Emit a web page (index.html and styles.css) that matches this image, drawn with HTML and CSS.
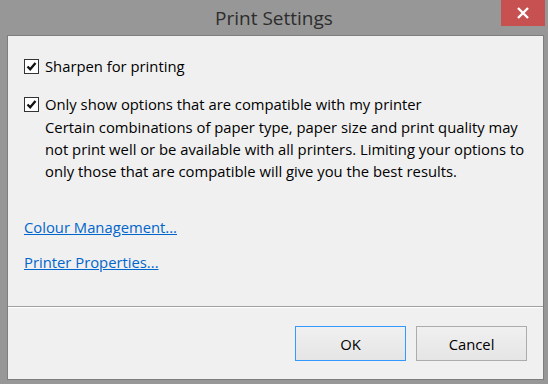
FILE: index.html
```html
<!DOCTYPE html>
<html lang="en">
<head>
  <meta charset="UTF-8">
  <title>Print Settings</title>
  <link rel="stylesheet" href="styles.css">
</head>
<body>

  <div class="window">
    <div class="titlebar">
      <span></span>
      <h1 class="title">Print Settings</h1>
      <button class="close" aria-label="Close">
        <svg width="14" height="12" viewBox="0 0 14 12">
          <path d="M2 1 L12 11 M12 1 L2 11" stroke="#fff" stroke-width="2.4" fill="none"/>
        </svg>
      </button>
    </div>

    <div class="client">
      <div class="options">
        <label class="check">
          <span class="box"><svg width="13" height="13" viewBox="0 0 13 13"><path d="M2.5 6.5 L5.2 9.3 L10.5 3" stroke="#111" stroke-width="2.3" fill="none"/></svg></span>
          Sharpen for printing
        </label>

        <div class="group">
          <label class="check">
            <span class="box"><svg width="13" height="13" viewBox="0 0 13 13"><path d="M2.5 6.5 L5.2 9.3 L10.5 3" stroke="#111" stroke-width="2.3" fill="none"/></svg></span>
            Only show options that are compatible with my printer
          </label>
          <p class="hint">Certain combinations of paper type, paper size and print quality may<br>not print well or be available with all printers. Limiting your options to<br>only those that are compatible will give you the best results.</p>
        </div>

        <div class="links">
          <a href="#">Colour Management...</a>
          <a href="#">Printer Properties...</a>
        </div>
      </div>

      <div class="footer">
        <button class="btn default">OK</button>
        <button class="btn">Cancel</button>
      </div>
    </div>
  </div>

</body>
</html>
```

FILE: styles.css
```css
* {
  box-sizing: border-box;
}

body {
  margin: 0;
  background: #979797;
  font-family: "Open Sans", "Noto Sans", sans-serif;
  color: #000;
}

.window {
  width: 548px;
  height: 384px;
  display: flex;
  flex-direction: column;
}

.titlebar {
  height: 35px;
  display: grid;
  grid-template-columns: 1fr auto 1fr;
}

.title {
  margin: 0;
  font-weight: normal;
  font-size: 19px;
  line-height: 36px;
  color: #2d2d2d;
}

.close {
  justify-self: end;
  width: 44px;
  height: 26px;
  margin-right: 3px;
  border: 0;
  padding: 0;
  background: #c75050;
  display: flex;
  align-items: center;
  justify-content: center;
}

.client {
  flex: 1;
  margin: 0 4px 4px 7px;
  border: 1px solid #7e7e7e;
  background: #f0f0f0;
  display: flex;
  flex-direction: column;
}

.options {
  height: 271px;
  padding: 20px 0 0 16px;
  border-bottom: 1px solid #a0a0a0;
  font-size: 14.8px;
}

.check {
  display: flex;
  align-items: center;
  gap: 6px;
  line-height: 20px;
}

.box {
  width: 15px;
  height: 15px;
  border: 1px solid #333;
  background: #fff;
  display: flex;
}

.group {
  margin-top: 18px;
}

.hint {
  margin: 2px 0 0 21px;
  line-height: 22px;
  white-space: nowrap;
}

.links {
  margin-top: 35px;
  display: flex;
  flex-direction: column;
  align-items: flex-start;
  gap: 15px;
}

.links a {
  color: #0066cc;
  line-height: 20px;
}

.footer {
  flex: 1;
  border-top: 1px solid #fff;
  display: flex;
  justify-content: flex-end;
  align-items: flex-start;
  gap: 10px;
  padding: 18px 16px 0 0;
}

.btn {
  width: 111px;
  height: 35px;
  border: 1px solid #acacac;
  background: linear-gradient(#f0f0f0, #e5e5e5);
  font-family: inherit;
  font-size: 14.8px;
  color: #000;
}

.btn.default {
  border-color: #3399ff;
}
```
